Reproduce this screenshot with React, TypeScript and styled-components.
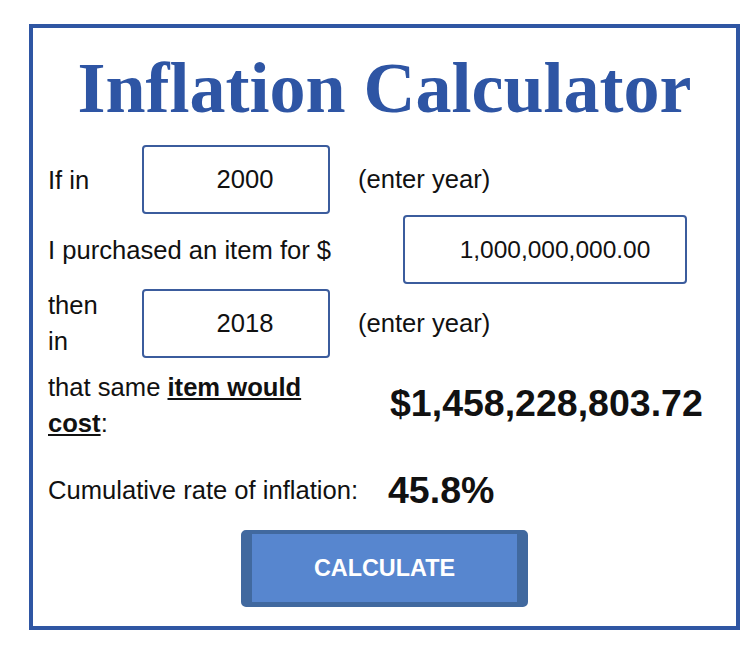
import React, { useState } from 'react'
import styled, { createGlobalStyle } from 'styled-components'

const GlobalStyle = createGlobalStyle`
  html, body {
    margin: 0;
    padding: 0;
    background: #ffffff;
  }
  body {
    font-family: "Liberation Sans", Arial, sans-serif;
    color: #111111;
  }
`

const Page = styled.div`
  padding: 24px 0 0 29px;
`

const Card = styled.div`
  box-sizing: border-box;
  width: 711px;
  height: 606px;
  border: 4px solid #2f56a3;
  padding: 24px 15px 0;
  display: flex;
  flex-direction: column;
`

const Title = styled.h1`
  margin: 0 0 21px;
  font-family: "Liberation Serif", "Times New Roman", serif;
  font-weight: 700;
  font-size: 72px;
  line-height: 72px;
  color: #2e55a4;
  text-align: center;
`

const Row = styled.div<{ $gap?: number }>`
  display: flex;
  align-items: center;
  margin-top: ${p => p.$gap ?? 0}px;
`

const Label = styled.div<{ $width: number; $pad?: number }>`
  box-sizing: border-box;
  width: ${p => p.$width}px;
  padding-right: ${p => p.$pad ?? 0}px;
  flex: none;
  font-size: 25.6px;
  line-height: 36px;
`

const Input = styled.input<{ $width: number; $size?: number; $padLeft?: number }>`
  box-sizing: border-box;
  width: ${p => p.$width}px;
  height: 69px;
  flex: none;
  border: 2px solid #3b5c9d;
  border-radius: 4px;
  padding: 0 0 0 ${p => p.$padLeft ?? 0}px;
  margin: 0;
  background: #ffffff;
  font-family: "Liberation Sans", Arial, sans-serif;
  font-size: ${p => p.$size ?? 25.6}px;
  color: #111111;
  text-align: center;
  outline: none;
`

const Hint = styled.span`
  margin-left: 28px;
  font-size: 25.6px;
`

const Strong = styled.span`
  font-weight: 700;
  text-decoration: underline;
  text-underline-offset: 2px;
`

const Result = styled.div`
  font-weight: 700;
  font-size: 37.5px;
  line-height: 44px;
  margin-top: -4px;
`

const Percent = styled(Result)`
  margin-left: 28px;
  margin-top: 0;
`

const ButtonWrap = styled.div`
  display: flex;
  justify-content: center;
  margin-top: 18px;
`

const Button = styled.button`
  box-sizing: border-box;
  width: 287px;
  height: 77px;
  background: #5786cf;
  border-style: solid;
  border-color: #41699f;
  border-width: 4px 11px 5px;
  border-radius: 5px;
  color: #ffffff;
  font-family: "Liberation Sans", Arial, sans-serif;
  font-weight: 700;
  font-size: 23.4px;
  cursor: pointer;
`

export default function App() {
  const [fromYear, setFromYear] = useState('2000')
  const [amount, setAmount] = useState('1,000,000,000.00')
  const [toYear, setToYear] = useState('2018')

  return (
    <Page>
      <GlobalStyle />
      <Card>
        <Title>Inflation Calculator</Title>

        <Row>
          <Label $width={94}>If in</Label>
          <Input
            $width={188}
            $padLeft={18}
            value={fromYear}
            onChange={e => setFromYear(e.target.value)}
          />
          <Hint>(enter year)</Hint>
        </Row>

        <Row $gap={1}>
          <Label $width={355}>I purchased an item for $</Label>
          <Input
            $width={284}
            $size={24.5}
            $padLeft={20}
            value={amount}
            onChange={e => setAmount(e.target.value)}
          />
        </Row>

        <Row $gap={3}>
          <Label $width={94} $pad={20}>then in</Label>
          <Input
            $width={188}
            $padLeft={18}
            value={toYear}
            onChange={e => setToYear(e.target.value)}
          />
          <Hint>(enter year)</Hint>
        </Row>

        <Row $gap={10}>
          <Label $width={342} $pad={30}>
            that same <Strong>item would cost</Strong>:
          </Label>
          <Result>$1,458,228,803.72</Result>
        </Row>

        <Row $gap={27}>
          <Label $width={312}>Cumulative rate of inflation:</Label>
          <Percent>45.8%</Percent>
        </Row>

        <ButtonWrap>
          <Button>CALCULATE</Button>
        </ButtonWrap>
      </Card>
    </Page>
  )
}
